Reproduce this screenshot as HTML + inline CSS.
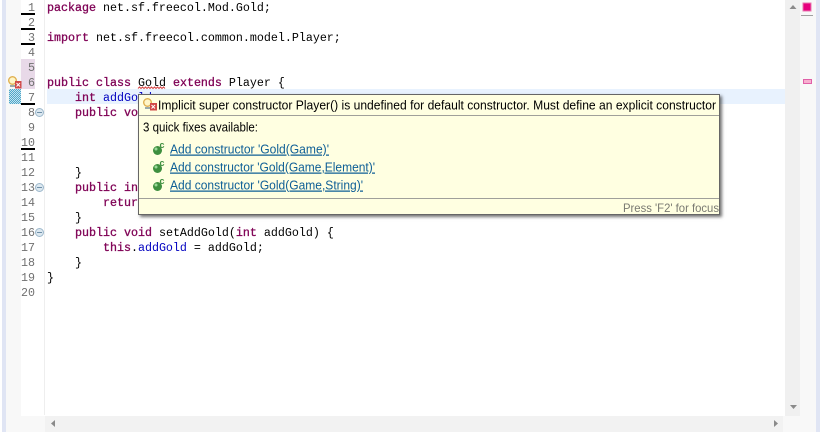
<!DOCTYPE html>
<html><head><meta charset="utf-8">
<style>
html,body{margin:0;padding:0;background:#fff}
#p{position:relative;width:823px;height:432px;overflow:hidden;background:#fff;font-family:"Liberation Mono",monospace}
#p div{position:absolute}
#code,#nums{margin:0;position:absolute;font:11.67px/15px "Liberation Mono",monospace;white-space:pre;filter:blur(.25px)}
#code{left:47px;top:1px;color:#000}
#nums{left:21px;top:1px;width:14px;text-align:right;color:#707070}
b{color:#7f0055;font-weight:normal;-webkit-text-stroke:.3px #7f0055}
i{font-style:normal;color:#0000c0}
svg{position:absolute;overflow:visible}
</style></head><body>
<div id="p">
<div style="left:2px;top:0;width:4px;height:432px;background:#e0e5f4"></div>
<div style="left:6px;top:0;width:15px;height:432px;background:#f8f8f8"></div>
<div style="left:21px;top:0;width:23px;height:415px;background:#fff"></div>
<div style="left:44px;top:0;width:1px;height:415px;background:#eee"></div>
<div style="left:21px;top:416px;width:24px;height:16px;background:#f8f8f8"></div>
<div style="left:45px;top:416px;width:738px;height:16px;background:#f2f2f2"></div>
<div style="left:783px;top:416px;width:33px;height:16px;background:#f8f8f8"></div>
<div style="left:785px;top:0;width:15px;height:416px;background:#f0f0f0"></div>
<div style="left:800px;top:0;width:16px;height:432px;background:#f8f8f8"></div>
<div style="left:816px;top:0;width:4px;height:432px;background:#e0e5f4"></div>

<div style="left:21px;top:59px;width:14px;height:30px;background:#e8d9e8"></div>
<div style="left:47px;top:89px;width:738px;height:15px;background:#e8f2fe"></div>
<div style="left:9px;top:89px;width:12px;height:15px;background:repeating-conic-gradient(#4fa6c8 0 25%,#c4e4f0 0 50%) 0 0/2px 2px"></div>

<pre id="nums">1
2
3
4
5
6
7
8
9
10
11
12
13
14
15
16
17
18
19
20</pre>
<div style="left:21px;top:13px;width:14px;height:2px;background:#000"></div>
<div style="left:21px;top:28px;width:14px;height:2px;background:#000"></div>
<div style="left:21px;top:43px;width:14px;height:2px;background:#000"></div>
<div style="left:21px;top:103px;width:14px;height:2px;background:#000"></div>
<div style="left:21px;top:148px;width:14px;height:2px;background:#000"></div>

<pre id="code"><b>package</b> net.sf.freecol.Mod.Gold;

<b>import</b> net.sf.freecol.common.model.Player;


<b>public</b> <b>class</b> Gold <b>extends</b> Player {
    <b>int</b> <i>addGold</i>;
    <b>public</b> <b>void</b>



    }
    <b>public</b> <b>int</b>
        <b>return</b>
    }
    <b>public</b> <b>void</b> setAddGold(<b>int</b> addGold) {
        <b>this</b>.<i>addGold</i> = addGold;
    }
}</pre>

<svg style="left:0;top:0" width="823" height="432">
 <path d="M138 88.5l1.5-1.5 1.5 1.5 1.5-1.5 1.500 1.500 1.500-1.500 1.500 1.500 1.500-1.500 1.500 1.500 1.500-1.500 1.500 1.500 1.500-1.500 1.500 1.500 1.500-1.500 1.500 1.500 1.500-1.500 1.500 1.500 1.500-1.500 1.500 1.500" fill="none" stroke="#d84a4a" stroke-width="1"/>
 <g fill="#dce8f0" stroke="#9db8cc"><circle cx="39.5" cy="112.5" r="4"/><circle cx="39.5" cy="187.5" r="4"/><circle cx="39.5" cy="232.5" r="4"/></g>
 <path d="M37 112.5h5M37 187.5h5M37 232.5h5" stroke="#6f8fa8"/>
 <circle cx="12.5" cy="80.5" r="3.8" fill="#fff6c8" stroke="#e0b050" stroke-width="1.400"/>
 <rect x="10" y="85" width="5" height="2" fill="#9aa"/>
 <rect x="15" y="81" width="6.500" height="7.500" fill="#d04848"/>
 <path d="M16.500 83l3.500 3.500M20 83l-3.500 3.500" stroke="#fff"/>
 <path d="M793 5l3.500 4h-7z" fill="#8a8a8a"/>
 <path d="M790 405h7l-3.500 4z" fill="#8a8a8a"/>
 <path d="M55 420v7l-4-3.500z" fill="#8a8a8a"/>
 <path d="M774 420v7l4-3.500z" fill="#8a8a8a"/>
 <rect x="803" y="3" width="8" height="8" fill="#e6007e" stroke="#e878b0"/>
 <rect x="801" y="15" width="12" height="1" fill="#a0a0a0"/>
 <rect x="803.500" y="79.500" width="8" height="4" fill="#f8b0d0" stroke="#e060a8"/>
</svg>

<div style="left:138px;top:94px;width:580px;height:119px;background:#ffffe1;border:1px solid #666;box-shadow:2px 2px 3px rgba(0,0,0,.55)"></div>
<div style="left:139px;top:115px;width:580px;height:1px;background:#a0a09a"></div>
<div style="left:139px;top:198px;width:580px;height:1px;background:#a0a09a"></div>
<svg style="left:0;top:0" width="823" height="432" font-family="Liberation Sans, sans-serif" font-size="12.500">
 <circle cx="147.500" cy="102.500" r="3.800" fill="#fff6c8" stroke="#e0b050" stroke-width="1.400"/>
 <rect x="145" y="107" width="5" height="2" fill="#9aa"/>
 <rect x="150" y="103" width="7" height="7.500" fill="#d04848"/>
 <path d="M151.500 105l3.500 3.500M155 105l-3.500 3.500" stroke="#fff"/>
 <text x="158" y="109.500" fill="#000" textLength="558" lengthAdjust="spacingAndGlyphs">Implicit super constructor Player() is undefined for default constructor. Must define an explicit constructor</text>
 <text x="143" y="131.500" fill="#000" textLength="115" lengthAdjust="spacingAndGlyphs">3 quick fixes available:</text>
 <g fill="#0f5f96" text-decoration="underline">
  <text x="170" y="153.500" textLength="159" lengthAdjust="spacingAndGlyphs">Add constructor 'Gold(Game)'</text>
  <text x="170" y="171.500" textLength="205" lengthAdjust="spacingAndGlyphs">Add constructor 'Gold(Game,Element)'</text>
  <text x="170" y="189.500" textLength="193" lengthAdjust="spacingAndGlyphs">Add constructor 'Gold(Game,String)'</text>
 </g>
 <g fill="#3f8f3f"><circle cx="157.500" cy="150.500" r="4.500"/><circle cx="157.500" cy="168.500" r="4.500"/><circle cx="157.500" cy="186.500" r="4.500"/></g>
 <g fill="#9ad89a"><circle cx="156" cy="149" r="1.500"/><circle cx="156" cy="167" r="1.500"/><circle cx="156" cy="185" r="1.500"/></g>
 <g fill="#3f8f3f" font-size="9" font-weight="bold"><text x="159.500" y="148">c</text><text x="159.500" y="166">c</text><text x="159.500" y="184">c</text></g>
 <text x="623" y="212" fill="#7a7a72" font-size="12" textLength="96" lengthAdjust="spacingAndGlyphs">Press 'F2' for focus</text>
</svg>
</div>
</body></html>
